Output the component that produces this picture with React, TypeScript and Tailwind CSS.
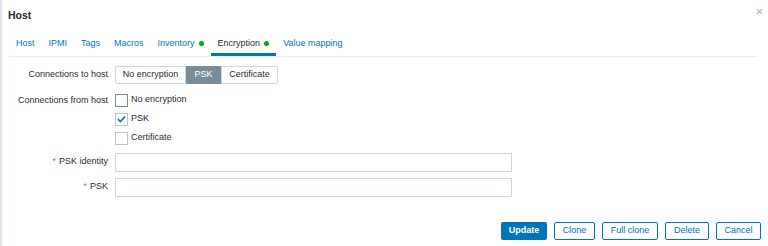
import React from "react";

const tabs = [
  { name: "Host" },
  { name: "IPMI" },
  { name: "Tags" },
  { name: "Macros" },
  { name: "Inventory", dot: true },
  { name: "Encryption", dot: true, active: true },
  { name: "Value mapping" },
];

function Checkbox({ checked, focused }: { checked?: boolean; focused?: boolean }) {
  return (
    <span
      className={`flex h-[13px] w-[13px] items-center justify-center border bg-white ${
        focused ? "border-[#768d99]" : "border-[#bcc6cc]"
      }`}
    >
      {checked && (
        <svg width="9" height="8" viewBox="0 0 9 8">
          <path d="M1 4.2 L3.4 6.5 L8 1.5" fill="none" stroke="#0275b8" strokeWidth="1.6" />
        </svg>
      )}
    </span>
  );
}

export default function App() {
  return (
    <div
      className="h-[246px] w-[768px] overflow-hidden border-l-[2px] border-[#dfe4e7] bg-white text-[9px] text-[#1f2c33]"
      style={{ fontFamily: '"Liberation Sans", Arial, sans-serif' }}
    >
      <div className="flex items-start justify-between pl-[6px] pr-[5px] pt-[9px]">
        <div className="text-[10.5px] font-bold leading-[12px]">Host</div>
        <svg width="7" height="7" viewBox="0 0 7 7" className="mt-[-1px]">
          <path d="M1 1 L6 6 M6 1 L1 6" stroke="#b5c0c6" strokeWidth="1.4" />
        </svg>
      </div>
      <div className="ml-[6px] mr-[11px] mt-[15px] flex border-b border-[#ebeef0] pl-[1px]">
        {tabs.map((t) => (
          <div
            key={t.name}
            className={`flex h-[20px] items-start px-[7px] pt-[2px] leading-[11px] ${
              t.active ? "border-b-[3px] border-[#0275b8] text-[#1f2c33]" : "text-[#0275b8]"
            }`}
          >
            <span>{t.name}</span>
            {t.dot && <span className="ml-[4px] mt-[3px] h-[5px] w-[5px] rounded-full bg-[#00a51f]" />}
          </div>
        ))}
      </div>
      <div className="mt-[9px] grid grid-cols-[106px_1fr] gap-x-[7px] pl-[0px]">
        <div className="flex h-[18px] items-center justify-end">Connections to host</div>
        <div className="flex h-[18px]">
          <div className="flex w-[71px] items-center justify-center rounded-l-[2px] border border-[#cfd8dc] bg-white">
            No encryption
          </div>
          <div className="flex w-[35px] items-center justify-center bg-[#768d99] text-white">PSK</div>
          <div className="flex w-[57px] items-center justify-center rounded-r-[2px] border border-[#cfd8dc] bg-white">
            Certificate
          </div>
        </div>
        <div className="mt-[9px] flex h-[16px] items-start justify-end pt-[1px]">Connections from host</div>
        <div className="mt-[9px] flex flex-col gap-[5px]">
          <label className="flex h-[14px] items-center gap-[3px]">
            <Checkbox focused />
            <span>No encryption</span>
          </label>
          <label className="flex h-[14px] items-center gap-[3px]">
            <Checkbox checked />
            <span>PSK</span>
          </label>
          <label className="flex h-[14px] items-center gap-[3px]">
            <Checkbox />
            <span>Certificate</span>
          </label>
        </div>
        <div className="mt-[8px] flex h-[18px] items-center justify-end">
          <span className="mr-[3px] text-[#e45959]">*</span>PSK identity
        </div>
        <div className="mt-[8px]">
          <div className="h-[19px] w-[397px] border border-[#cfd8dc] bg-white" />
        </div>
        <div className="mt-[6px] flex h-[18px] items-center justify-end">
          <span className="mr-[3px] text-[#e45959]">*</span>PSK
        </div>
        <div className="mt-[6px]">
          <div className="h-[19px] w-[397px] border border-[#cfd8dc] bg-white" />
        </div>
      </div>
      <div className="mr-[7px] mt-[25px] flex justify-end gap-[7px]">
        <button className="h-[18px] w-[46px] rounded-[2px] bg-[#0275b8] font-bold text-white">Update</button>
        <button className="h-[18px] w-[41px] rounded-[2px] border border-[#0275b8] bg-white text-[#0275b8]">Clone</button>
        <button className="h-[18px] w-[56px] rounded-[2px] border border-[#0275b8] bg-white text-[#0275b8]">Full clone</button>
        <button className="h-[18px] w-[44px] rounded-[2px] border border-[#0275b8] bg-white text-[#0275b8]">Delete</button>
        <button className="h-[18px] w-[45px] rounded-[2px] border border-[#0275b8] bg-white text-[#0275b8]">Cancel</button>
      </div>
    </div>
  );
}
